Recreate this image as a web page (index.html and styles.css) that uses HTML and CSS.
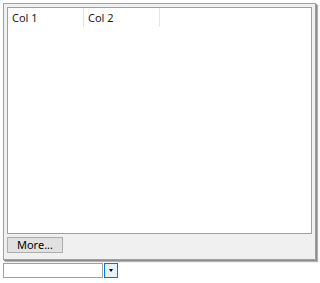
FILE: index.html
```html
<!DOCTYPE html>
<html>
<head>
<meta charset="utf-8">
<link rel="stylesheet" href="styles.css">
</head>
<body>
<div class="frame">
  <div class="list">
    <div class="header">
      <div class="col c1">Col 1</div>
      <div class="col c2">Col 2</div>
    </div>
  </div>
  <div class="footer">
    <button class="more">More...</button>
  </div>
</div>
<div class="combo">
  <div class="field"></div>
  <div class="drop"><span class="arrow"></span></div>
</div>
</body>
</html>
```

FILE: styles.css
```css
html, body {
  margin: 0;
  padding: 0;
  background: #ffffff;
  font-family: "Noto Sans", "Open Sans", sans-serif;
  font-size: 11px;
  color: #000;
}
.frame {
  margin: 3px 0 0 3px;
  width: 311px;
  height: 255px;
  border: 1px solid #a0a0a0;
  box-shadow: 1px 1px 0 #8c8c8c, 2px 2px 1px #b4b4b4;
  background: #f0f0f0;
  display: flex;
  flex-direction: column;
}
.list {
  margin: 3px 3px 0 3px;
  height: 225px;
  border: 1px solid #a0a0a0;
  background: #fff;
}
.header {
  display: flex;
  height: 19px;
}
.col {
  box-sizing: border-box;
  padding-left: 4px;
  line-height: 19px;
  border-right: 1px solid #e5e5e5;
  color: #1a1a1a;
}
.c1 { width: 76px; }
.c2 { width: 76px; }
.footer {
  flex: 1;
  padding: 3px 3px 0 3px;
}
.more {
  display: block;
  width: 56px;
  height: 16px;
  margin: 0;
  padding: 0;
  border: 1px solid #adadad;
  background: #e1e1e1;
  font-family: inherit;
  font-size: 11px;
  line-height: 14px;
  color: #000;
}
.combo {
  display: flex;
  margin: 3px 0 0 3px;
}
.field {
  width: 98px;
  height: 13px;
  border: 1px solid #a0a0a0;
  background: #fff;
}
.drop {
  width: 12px;
  height: 13px;
  border: 1px solid #0078d7;
  background: #e5f1fb;
  display: flex;
  align-items: center;
  justify-content: center;
  margin-left: 1px;
}
.arrow {
  width: 0;
  height: 0;
  border-left: 2px solid transparent;
  border-right: 2px solid transparent;
  border-top: 3px solid #000;
}
```
